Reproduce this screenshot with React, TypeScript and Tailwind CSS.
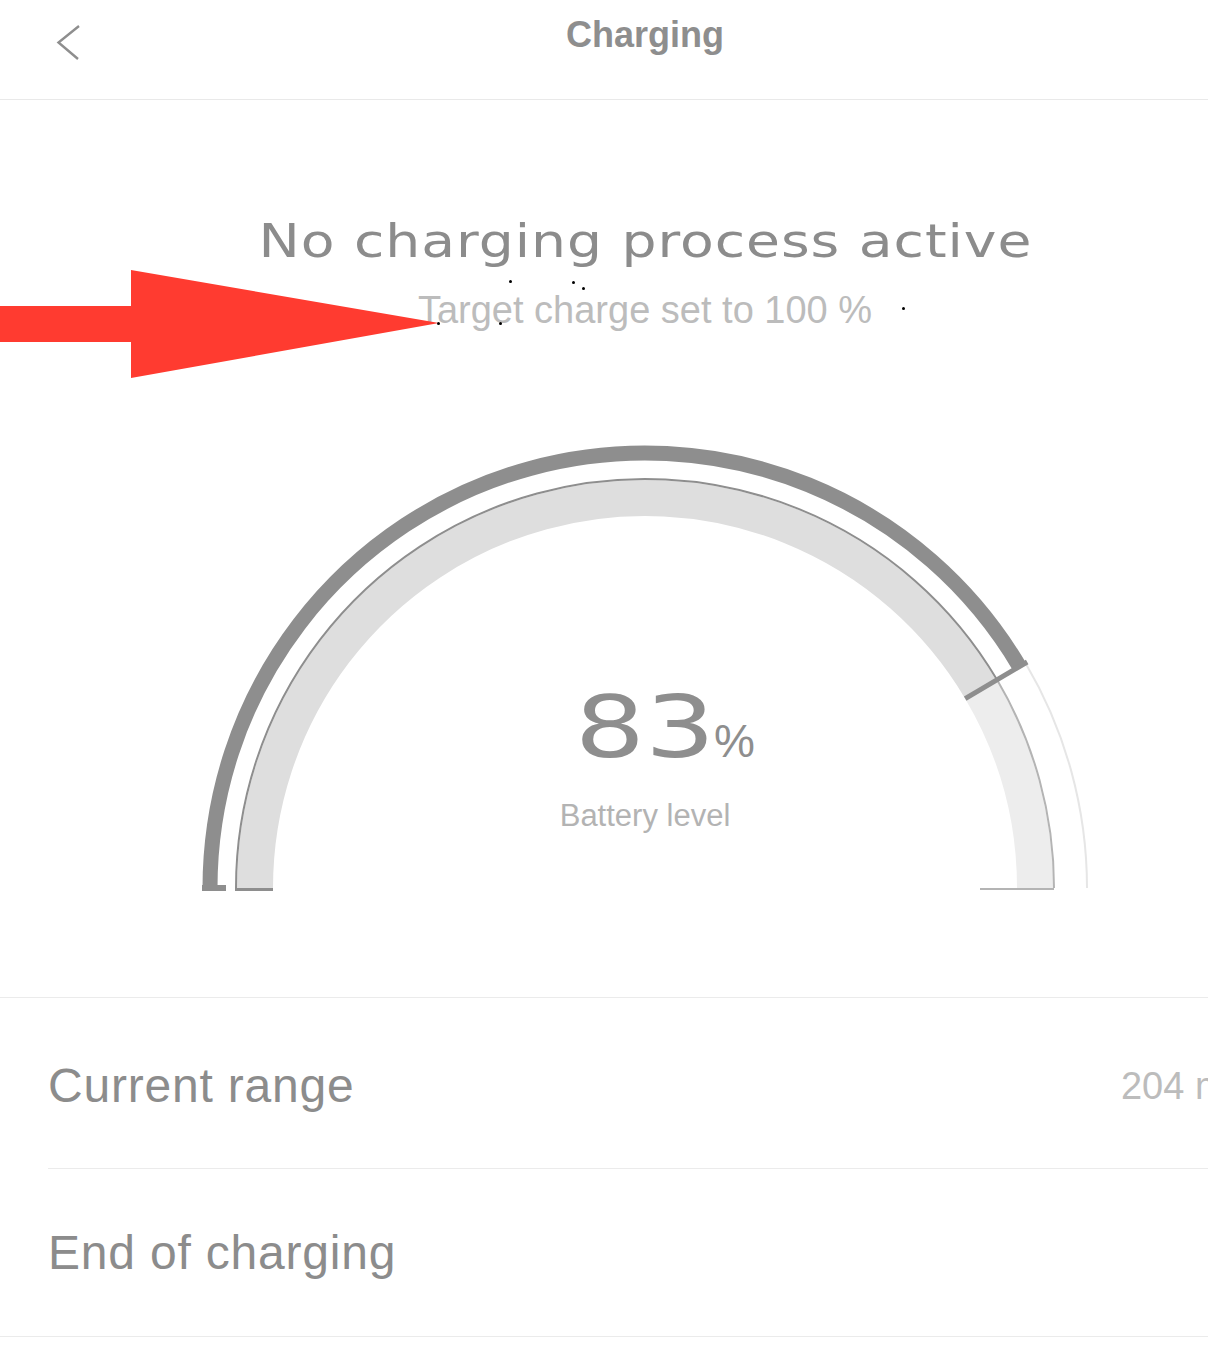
import React from "react";

const DOTS: Array<[number, number]> = [
  [510, 281],
  [573, 282],
  [583, 288],
  [438, 323],
  [500, 323],
  [903, 308],
];

function Gauge() {
  // centre of the gauge inside the svg
  const cx = 645;
  const cy = 448;
  const deg = Math.PI / 180;
  const t = 30.6 * deg;
  const pt = (r: number) => [cx + r * Math.cos(t), cy - r * Math.sin(t)];
  const [oEx, oEy] = pt(435);
  const [fSx, fSy] = pt(442);
  const [bEx, bEy] = pt(390);
  const [lEx, lEy] = pt(409);
  const [k1x, k1y] = pt(372);
  const [k2x, k2y] = pt(444);

  return (
    <svg width="1290" height="460" viewBox="0 0 1290 460" className="block">
      {/* band: filled + remaining */}
      <path d={`M ${cx - 390} ${cy} A 390 390 0 0 1 ${bEx} ${bEy}`} fill="none" stroke="#dedede" strokeWidth="36" />
      <path d={`M ${bEx} ${bEy} A 390 390 0 0 1 ${cx + 390} ${cy}`} fill="none" stroke="#ededed" strokeWidth="36" />
      {/* thin line on band */}
      <path d={`M ${cx - 409} ${cy} A 409 409 0 0 1 ${lEx} ${lEy}`} fill="none" stroke="#8e8e8e" strokeWidth="2" />
      <path d={`M ${lEx} ${lEy} A 409 409 0 0 1 ${cx + 409} ${cy}`} fill="none" stroke="#b4b4b4" strokeWidth="2" />
      {/* faint outer continuation */}
      <path d={`M ${fSx} ${fSy} A 442 442 0 0 1 ${cx + 442} ${cy}`} fill="none" stroke="#e6e6e6" strokeWidth="2" />
      {/* outer thick arc */}
      <path d={`M ${cx - 435} ${cy} A 435 435 0 0 1 ${oEx} ${oEy}`} fill="none" stroke="#8e8e8e" strokeWidth="15" />
      {/* end tick */}
      <line x1={k1x} y1={k1y} x2={k2x} y2={k2y} stroke="#8e8e8e" strokeWidth="5" />
      {/* left foot of outer arc */}
      <rect x="202" y="445" width="24" height="6" fill="#8e8e8e" />
      {/* left bottom line of band */}
      <line x1="235" y1="449.5" x2="273" y2="449.5" stroke="#8e8e8e" strokeWidth="3" />
      {/* right bottom line */}
      <line x1="980" y1="449" x2="1054" y2="449" stroke="#b4b4b4" strokeWidth="2" />
    </svg>
  );
}

export default function App() {
  return (
    <div className="relative w-[1208px] min-h-[1348px] overflow-hidden bg-white">
      <div className="w-[1290px]" style={{ fontFamily: '"Liberation Sans", Arial, sans-serif' }}>
        {/* header */}
        <div className="grid h-[100px] grid-cols-[1fr_auto_1fr] items-start border-b border-[#e9e9e9]">
          <div className="pl-[56px] pt-[24px]">
            <svg width="26" height="38" viewBox="0 0 26 38">
              <polyline points="23,2 2.5,18.5 22,35" fill="none" stroke="#8e8e8e" strokeWidth="2.4" strokeLinejoin="miter" />
            </svg>
          </div>
          <div className="mt-[15px] text-[36px] font-bold leading-[40px] text-[#8e8e8e]">Charging</div>
          <div />
        </div>

        {/* status */}
        <div className="mt-[113px] flex justify-center">
          <div
            className="scale-x-[1.2] text-[46px] leading-[56px] tracking-[0.8px] text-[#8c8c8c]"
            style={{ fontFamily: '"DejaVu Sans", sans-serif' }}
          >
            No charging process active
          </div>
        </div>
        <div className="mt-[19px] text-center text-[38px] leading-[44px] text-[#bcbcbc]">
          Target charge set to 100 %
        </div>

        {/* gauge */}
        <div className="relative mt-[108px] h-[460px]">
          <Gauge />
          <div className="absolute inset-x-0 top-[245px] flex flex-col items-center">
            <div className="relative h-[85px]">
              <div
                className="scale-x-[1.3] text-[85px] leading-[85px] text-[#8e8e8e]"
                style={{ fontFamily: '"DejaVu Sans", sans-serif' }}
              >
                83
              </div>
              <div className="absolute bottom-[6px] left-[calc(100%+15px)] text-[46px] leading-none text-[#8e8e8e]">
                %
              </div>
            </div>
            <div className="mt-[28px] text-[31px] leading-[36px] text-[#b3b3b3]">Battery level</div>
          </div>
        </div>

        {/* rows */}
        <div className="mt-[97px] border-y border-[#ebebeb]">
          <div className="pl-[48px]">
            <div className="flex h-[171px] items-center justify-between border-b border-[#ebebeb] pr-[55px] pt-[5px]">
              <div className="text-[48px] leading-[56px] tracking-[0.8px] text-[#8c8c8c]">Current range</div>
              <div className="text-[38px] leading-[44px] text-[#bcbcbc]">204 mi</div>
            </div>
          </div>
          <div className="flex h-[167px] items-center pl-[48px]">
            <div className="text-[48px] leading-[56px] tracking-[0.8px] text-[#8c8c8c]">End of charging</div>
          </div>
        </div>
      </div>

      {/* annotation arrow */}
      <svg width="442" height="110" viewBox="0 0 442 110" className="absolute left-0 top-[269px]">
        <polygon points="0,37 131,37 131,1 439,54 131,109 131,73 0,73" fill="#ff3b30" />
      </svg>

      {/* annotation dots */}
      {DOTS.map(([x, y], i) => (
        <div
          key={i}
          className="absolute h-[3px] w-[3px] rounded-full bg-black"
          style={{ left: x - 1.5, top: y - 1.5 }}
        />
      ))}
    </div>
  );
}
